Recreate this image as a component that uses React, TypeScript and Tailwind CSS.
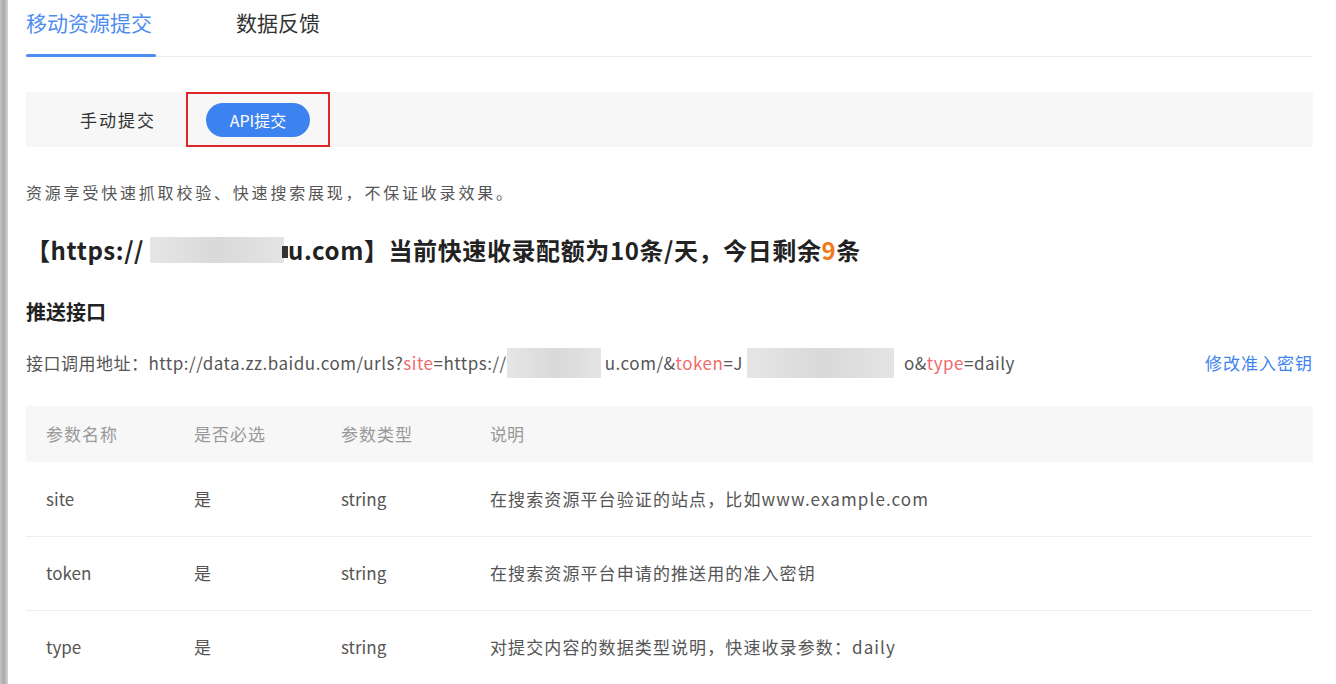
import React from 'react'

const font = { fontFamily: '"Noto Sans CJK SC", "Noto Sans", sans-serif' }

/** Blurred-out (redacted) piece of a url */
function Redacted({ className }: { className: string }) {
  return (
    <span
      className={`inline-block align-middle bg-gradient-to-r from-[#e6e6e6] via-[#d9d9d9] to-[#e4e4e4] ${className}`}
    />
  )
}

const params = [
  { name: 'site', desc: '在搜索资源平台验证的站点，比如www.example.com' },
  { name: 'token', desc: '在搜索资源平台申请的推送用的准入密钥' },
  { name: 'type', desc: '对提交内容的数据类型说明，快速收录参数：daily' }
]

export default function App() {
  return (
    <div className="flex h-[684px] w-[1336px] overflow-hidden bg-white" style={font}>
      {/* left gutter of the browser */}
      <div className="w-[8px] shrink-0 bg-gradient-to-r from-[#c4c4c4] via-[#a9a9a9] to-[#d6d6d6]" />

      <div className="ml-[18px] w-[1287px] shrink-0">
        {/* Tabs */}
        <div className="flex h-[57px] border-b border-[#ececec]">
          <div className="flex h-full w-[130px] flex-col justify-between">
            <span className="mt-[6px] text-[21px] leading-[32px] text-[#4d8cf0]">移动资源提交</span>
            <span className="mb-[-1px] h-[3px] w-[130px] rounded-sm bg-[#4d8cf0]" />
          </div>
          <span className="ml-[80px] mt-[6px] text-[21px] leading-[32px] text-[#333]">数据反馈</span>
        </div>

        {/* Sub tabs */}
        <div className="mt-[35px] flex h-[55px] items-center bg-[#f7f7f8]">
          <span className="ml-[54px] text-[17px] tracking-[2px] text-[#333]">手动提交</span>
          <div className="ml-[30px] flex h-[55px] w-[144px] items-center justify-center border-2 border-[#e0262b]">
            <span className="flex h-[34px] w-[104px] items-center justify-center rounded-full bg-[#3d83ef] text-[16px] text-white">
              API提交
            </span>
          </div>
        </div>

        <p className="mt-[33px] text-[16px] leading-[24px] tracking-[2.8px] text-[#555]">
          资源享受快速抓取校验、快速搜索展现，不保证收录效果。
        </p>

        <h2 className="mt-[30px] flex items-center text-[24px] font-bold leading-[32px] tracking-[0.6px] text-[#222]">
          <span>【https://</span>
          <Redacted className="ml-[6px] h-[26px] w-[134px]" />
          <span className="ml-[-2px] mb-[8px] inline-block h-[12px] w-[6px] self-end bg-[#333]" />
          <span>u.com】当前快速收录配额为10条/天，今日剩余</span>
          <span className="text-[#f07a1a]">9</span>
          <span>条</span>
        </h2>

        <h3 className="mt-[31px] text-[20px] font-bold leading-[30px] text-[#222]">推送接口</h3>

        <div className="mt-[21px] flex h-[30px] items-center justify-between text-[17px] tracking-[0.5px] text-[#555]">
          <div className="flex items-center">
            <span>接口调用地址：http://data.zz.baidu.com/urls?</span>
            <span className="text-[#f26b6b]">site</span>
            <span>=https://</span>
            <Redacted className="h-[30px] w-[94px]" />
            <span className="ml-[4px]">u.com/&amp;</span>
            <span className="text-[#f26b6b]">token</span>
            <span>=J</span>
            <Redacted className="ml-[4px] h-[30px] w-[147px]" />
            <span className="ml-[10px]">o&amp;</span>
            <span className="text-[#f26b6b]">type</span>
            <span>=daily</span>
          </div>
          <span className="text-[17px] tracking-[1px] text-[#3d83ef]">修改准入密钥</span>
        </div>

        {/* Params table */}
        <table className="mt-[28px] w-full border-collapse text-left text-[17px]">
          <thead>
            <tr className="h-[56px] bg-[#f7f7f8] text-[#999]">
              <th className="w-[168px] pl-[20px] font-normal tracking-[1px]">参数名称</th>
              <th className="w-[147px] font-normal tracking-[1px]">是否必选</th>
              <th className="w-[149px] font-normal tracking-[1px]">参数类型</th>
              <th className="font-normal">说明</th>
            </tr>
          </thead>
          <tbody>
            {params.map((p) => (
              <tr key={p.name} className="h-[74px] border-b border-[#eeeeee] text-[#555]">
                <td className="pl-[20px]">{p.name}</td>
                <td>是</td>
                <td>string</td>
                <td className="tracking-[1.1px]">{p.desc}</td>
              </tr>
            ))}
          </tbody>
        </table>
      </div>
    </div>
  )
}
